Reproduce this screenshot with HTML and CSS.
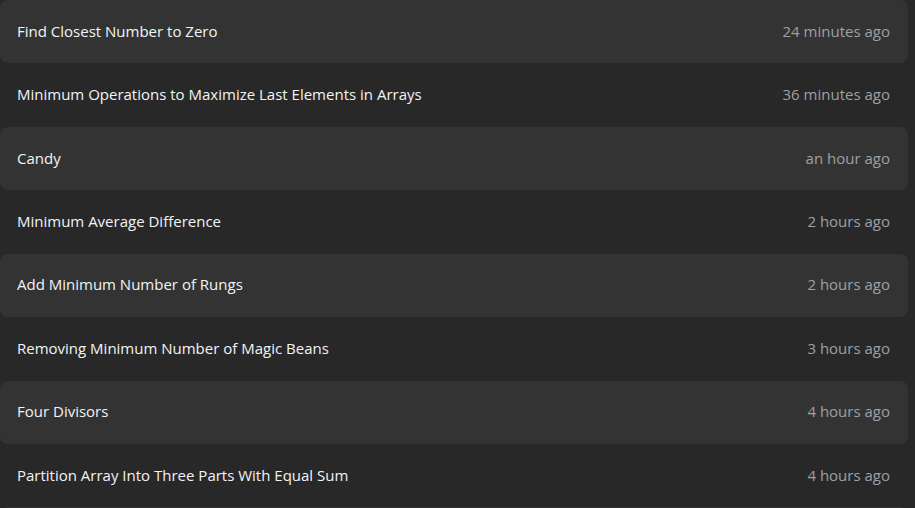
FILE: index.html
```html
<!DOCTYPE html>
<html lang="en">
<head>
<meta charset="utf-8">
<title>Recent submissions</title>
<link rel="stylesheet" href="styles.css">
</head>
<body>
<div class="list">
  <div class="row alt"><span class="title">Find Closest Number to Zero</span><span class="time">24 minutes ago</span></div>
  <div class="row"><span class="title">Minimum Operations to Maximize Last Elements in Arrays</span><span class="time">36 minutes ago</span></div>
  <div class="row alt"><span class="title">Candy</span><span class="time">an hour ago</span></div>
  <div class="row"><span class="title">Minimum Average Difference</span><span class="time">2 hours ago</span></div>
  <div class="row alt"><span class="title">Add Minimum Number of Rungs</span><span class="time">2 hours ago</span></div>
  <div class="row"><span class="title">Removing Minimum Number of Magic Beans</span><span class="time">3 hours ago</span></div>
  <div class="row alt"><span class="title">Four Divisors</span><span class="time">4 hours ago</span></div>
  <div class="row"><span class="title">Partition Array Into Three Parts With Equal Sum</span><span class="time">4 hours ago</span></div>
  <div class="row alt" aria-hidden="true"></div>
</div>
</body>
</html>
```
FILE: styles.css
```css
html, body {
  margin: 0;
  padding: 0;
  background: #282828;
  overflow: hidden;
}
body {
  font-family: "Open Sans", "Noto Sans", sans-serif;
  font-size: 15px;
}
.list {
  width: 908px;
  display: flex;
  flex-direction: column;
}
.row {
  height: 63.43px;
  flex-shrink: 0;
  box-sizing: border-box;
  display: flex;
  align-items: center;
  justify-content: space-between;
  padding: 0 18px 2px 17px;
  border-radius: 8px;
}
.row.alt {
  background: #333333;
}
.title {
  color: #f2f3f6;
}
.time {
  color: #9ea0a4;
}
```
